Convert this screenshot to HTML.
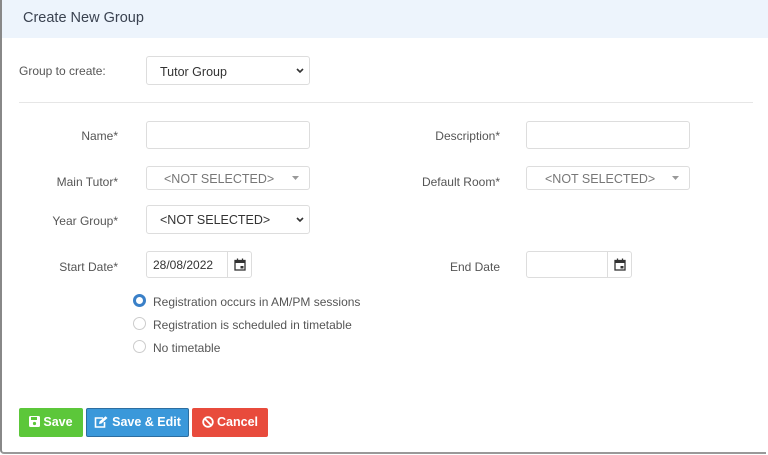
<!DOCTYPE html>
<html><head><style>
*{box-sizing:border-box;margin:0;padding:0}
body{width:768px;height:455px;background:#fff;font-family:"Liberation Sans",sans-serif;font-size:12px;color:#555;position:relative;overflow:hidden}
.frame{position:absolute;left:0;top:0;width:766px;height:454px;border-left:2px solid #888;border-bottom:2px solid #999;border-bottom-left-radius:4px}
.hdr{position:absolute;left:2px;top:0;width:766px;height:38px;background:#edf4fc}
.hdr span{position:absolute;left:21px;top:10px;font-size:14.5px;color:#3a4250}
.a{position:absolute}
.lbl{position:absolute;text-align:right;width:200px;font-size:12px;color:#555}
.box{position:absolute;border:1px solid #ddd;border-radius:3px;background:#fff}
.sel{font-size:12.5px;color:#333}
.ns{color:#777;font-size:12.5px}
.cal{position:absolute;top:0;right:0;width:24px;height:100%;border-left:1px solid #ddd}
.rad{position:absolute;left:133px;width:13px;height:13px;border:1px solid #ccc;border-radius:50%}
.rt{position:absolute;left:153px;font-size:12px;color:#555}
.btn{position:absolute;top:408px;height:29px;color:#fff;font-size:12.5px;font-weight:bold;border-radius:2px;line-height:29px;text-align:center}
</style></head><body>
<div class="frame"></div>
<div class="hdr"><span>Create New Group</span></div>
<div class="a" style="left:19px;top:64px;font-size:12px">Group to create:</div>
<div class="box sel" style="left:146px;top:56px;width:164px;height:29px"><span class="a" style="left:13px;top:8px">Tutor Group</span><svg class="a" style="left:149px;top:11px" width="8" height="6"><path d="M1 1l3 3 3-3" stroke="#333" stroke-width="1.6" fill="none"/></svg></div>
<div class="a" style="left:19px;top:102px;width:734px;height:1px;background:#e6e6e6"></div>

<div class="lbl" style="left:-82px;top:129px">Name*</div>
<div class="box" style="left:146px;top:121px;width:164px;height:28px"></div>
<div class="lbl" style="left:300px;top:129px">Description*</div>
<div class="box" style="left:526px;top:121px;width:164px;height:28px"></div>

<div class="lbl" style="left:-82px;top:175px">Main Tutor*</div>
<div class="box" style="left:146px;top:166px;width:164px;height:24px"><span class="a ns" style="left:17px;top:5px">&lt;NOT SELECTED&gt;</span><svg class="a" style="left:145px;top:9px" width="8" height="5"><path d="M0 0h7l-3.5 4z" fill="#999"/></svg></div>
<div class="lbl" style="left:300px;top:175px">Default Room*</div>
<div class="box" style="left:526px;top:166px;width:164px;height:24px"><span class="a ns" style="left:18px;top:5px">&lt;NOT SELECTED&gt;</span><svg class="a" style="left:145px;top:9px" width="8" height="5"><path d="M0 0h7l-3.5 4z" fill="#999"/></svg></div>

<div class="lbl" style="left:-82px;top:214px">Year Group*</div>
<div class="box sel" style="left:146px;top:205px;width:164px;height:29px"><span class="a" style="left:13px;top:7px">&lt;NOT SELECTED&gt;</span><svg class="a" style="left:149px;top:11px" width="8" height="6"><path d="M1 1l3 3 3-3" stroke="#333" stroke-width="1.6" fill="none"/></svg></div>

<div class="lbl" style="left:-82px;top:260px">Start Date*</div>
<div class="box" style="left:146px;top:251px;width:106px;height:27px"><span class="a" style="left:6px;top:6px;color:#333;font-size:12px">28/08/2022</span><div class="cal"><svg class="a" style="left:6px;top:6px" width="12" height="13"><rect x="1" y="2.5" width="10" height="9.5" fill="none" stroke="#333" stroke-width="1.3"/><rect x="1" y="2.5" width="10" height="2.5" fill="#333"/><path d="M3.5 0.5v3M8.5 0.5v3" stroke="#333" stroke-width="1.3"/><rect x="6.5" y="8" width="3" height="2.5" fill="#333"/></svg></div></div>
<div class="lbl" style="left:300px;top:260px">End Date</div>
<div class="box" style="left:526px;top:251px;width:106px;height:27px"><div class="cal"><svg class="a" style="left:6px;top:6px" width="12" height="13"><rect x="1" y="2.5" width="10" height="9.5" fill="none" stroke="#333" stroke-width="1.3"/><rect x="1" y="2.5" width="10" height="2.5" fill="#333"/><path d="M3.5 0.5v3M8.5 0.5v3" stroke="#333" stroke-width="1.3"/><rect x="6.5" y="8" width="3" height="2.5" fill="#333"/></svg></div></div>

<div class="rad" style="top:294px;border:3.5px solid #3a80c8"></div><div class="rt" style="top:295px">Registration occurs in AM/PM sessions</div>
<div class="rad" style="top:317px"></div><div class="rt" style="top:318px">Registration is scheduled in timetable</div>
<div class="rad" style="top:340px"></div><div class="rt" style="top:341px">No timetable</div>

<div class="btn" style="left:19px;width:64px;background:#5cc73a"><svg style="vertical-align:-1px;margin-right:3px" width="11" height="11"><rect x="0" y="0" width="11" height="11" rx="1.5" fill="#fff"/><rect x="2" y="1" width="6" height="3" fill="#5cc73a"/><circle cx="5.5" cy="7.5" r="1.6" fill="#5cc73a"/></svg>Save</div>
<div class="btn" style="left:86px;width:103px;background:#3a98da;border:1px solid #2d6ea0;line-height:27px"><svg style="vertical-align:-2px;margin-right:4px" width="14" height="12"><path d="M9 2H1.5v9h9V6" fill="none" stroke="#fff" stroke-width="1.6"/><path d="M5 8l0.5-2.5L11.5 0.2 13.5 2 7.5 7.5z" fill="#fff"/></svg>Save &amp; Edit</div>
<div class="btn" style="left:192px;width:76px;background:#e84b3c"><svg style="vertical-align:-2px;margin-right:3px" width="12" height="12"><circle cx="6" cy="6" r="4.8" fill="none" stroke="#fff" stroke-width="1.8"/><path d="M2.8 2.8l6.4 6.4" stroke="#fff" stroke-width="1.8"/></svg>Cancel</div>
</body></html>
